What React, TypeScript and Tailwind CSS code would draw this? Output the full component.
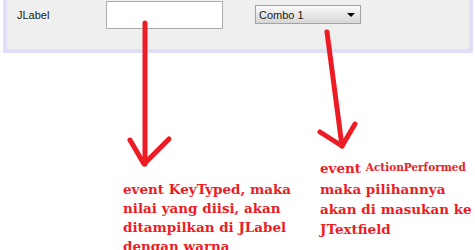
export default function App() {
  return (
    <div className="relative w-[475px] h-[250px] bg-white overflow-hidden">
      {/* swing panel */}
      <div className="ml-[3px] w-[470px] h-[53px] border-x-4 border-b-4 border-[#dfdff9] bg-[#efefef] flex items-start font-['Liberation_Sans',sans-serif] text-[11px] text-[#1a1a1a]">
        <div className="w-[99px] pl-[10px] pt-[8px] leading-[14px]">JLabel</div>
        <div className="mt-[1px] w-[117px] h-[28px] border border-[#ababab] bg-white" />
        <div className="ml-[32px] mt-[5px] w-[106px] h-[19px] border border-[#a3a3a3] bg-gradient-to-b from-[#fafafa] to-[#d6d6d6] flex items-center justify-between pl-[3px] pr-[5px]">
          <span className="leading-[14px]">Combo 1</span>
          <span className="w-0 h-0 border-x-[4px] border-x-transparent border-t-[4px] border-t-black" />
        </div>
      </div>

      {/* notes */}
      <div className="flex items-start font-['DejaVu_Serif',serif] font-bold text-[13.5px] text-[#ec1c26]">
        <div className="ml-[123px] mt-[127px] w-[182px] leading-[19px]">
          <div>event KeyTyped, maka</div>
          <div>nilai yang diisi, akan</div>
          <div>ditampilkan di JLabel</div>
          <div>dengan warna</div>
        </div>
        <div className="ml-[15px] mt-[105px] leading-[20px] whitespace-nowrap">
          <div>
            event <span className="relative -top-[2px] text-[10.5px]">ActionPerformed</span>
          </div>
          <div>maka pilihannya</div>
          <div>akan di masukan ke</div>
          <div>JTextfield</div>
        </div>
      </div>

      {/* arrows drawn over */}
      <svg className="absolute inset-0 pointer-events-none" width="475" height="250" viewBox="0 0 475 250">
        <g stroke="#ed1c24" strokeWidth="5" fill="none" strokeLinecap="round" strokeLinejoin="round">
          <path d="M145 23 L145 164" />
          <path d="M130 140 L144 164 L169 139" />
          <path d="M327 32 L342 146" />
          <path d="M320 132 L342 146 L355 124" />
        </g>
      </svg>
    </div>
  );
}
